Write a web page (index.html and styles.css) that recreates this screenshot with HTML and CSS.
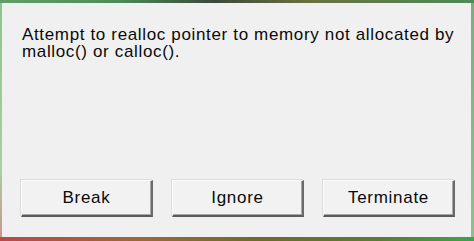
FILE: index.html
```html
<!DOCTYPE html>
<html>
<head>
<meta charset="utf-8">
<link rel="stylesheet" href="styles.css">
</head>
<body>
<div class="frame">
  <div class="dialog">
    <p class="message">Attempt to realloc pointer to memory not allocated by malloc() or calloc().</p>
    <div class="buttons">
      <button class="btn">Break</button>
      <button class="btn">Ignore</button>
      <button class="btn">Terminate</button>
    </div>
  </div>
</div>
</body>
</html>
```

FILE: styles.css
```css
html, body {
  margin: 0;
  padding: 0;
}
body {
  width: 474px;
  height: 241px;
  overflow: hidden;
  font-family: "Liberation Sans", Arial, sans-serif;
}
.frame {
  box-sizing: border-box;
  width: 474px;
  height: 241px;
  padding: 3px 3px 4px 2px;
  display: flex;
  background:
    linear-gradient(to right, #b84a4a 0%, #9a6a3a 30%, #6e6a2e 55%, #5c7a3a 80%, #3fa24a 100%) bottom / 100% 4px no-repeat,
    linear-gradient(to right, #5fa06a 0%, #4d8a58 25%, #3a4a3a 45%, #6a7040 65%, #4f8a5a 100%) top / 100% 3px no-repeat,
    linear-gradient(to bottom, #8cc48c, #a8d0a0 70%, #d09090) left / 2px 100% no-repeat,
    linear-gradient(to bottom, #78b07c, #8ac48a) right / 3px 100% no-repeat;
}
.dialog {
  flex: 1;
  background: #f0f0f0;
  display: flex;
  flex-direction: column;
  padding: 23px 0 20px 20px;
}
.message {
  margin: 0;
  font-size: 17px;
  line-height: 17px;
  letter-spacing: 0.65px;
  color: #0a0a0a;
  width: 446px;
}
.buttons {
  margin-top: auto;
  display: flex;
  gap: 19px;
  margin-left: -1px;
}
.btn {
  box-sizing: border-box;
  width: 132px;
  height: 37px;
  margin: 0;
  padding: 0;
  background: #f2f2f2;
  border-style: solid;
  border-width: 1px 2px 2px 1px;
  border-color: #fcfcfc #6a6a6a #5a5a5a #fcfcfc;
  box-shadow: inset -1px -1px 0 #a8a8a8, -1px -1px 0 #dcdcdc;
  font-family: "Liberation Sans", Arial, sans-serif;
  font-size: 17px;
  letter-spacing: 0.7px;
  color: #0a0a0a;
}
```
